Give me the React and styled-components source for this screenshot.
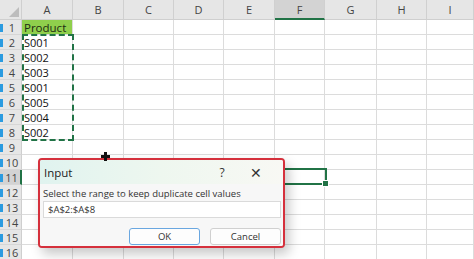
import React from "react";
import styled, {createGlobalStyle, css} from "styled-components";


const GlobalStyle = createGlobalStyle`
  html, body {
    margin: 0;
    padding: 0;
    background: #ffffff;
    overflow: hidden;
  }
  * {
    box-sizing: border-box;
  }
`;


const COLS = ["A", "B", "C", "D", "E", "F", "G", "H", "I"];
const COL_WIDTHS = "22px 51px 51px 50px 50px 51px 50px 52px 50px 1fr";
const ROWS = 16;
const DATA = {1: "Product", 2: "S001", 3: "S002", 4: "S003", 5: "S001", 6: "S005", 7: "S004", 8: "S002"};


const Screen = styled.div`
  position: relative;
  width: 474px;
  height: 259px;
  overflow: hidden;
  font-family: "Open Sans", "Noto Sans", sans-serif;
`;


const Sheet = styled.div`
  display: grid;
  grid-template-columns: ${COL_WIDTHS};
  grid-template-rows: 20px repeat(${ROWS}, 15px);
`;


const Corner = styled.div`
  position: relative;
  background: #e6e6e6;
  border-right: 1px solid #cfcfcf;
  border-bottom: 1px solid #cfcfcf;

  &::after {
    content: "";
    position: absolute;
    right: 2px;
    bottom: 2px;
    width: 0;
    height: 0;
    border-left: 10px solid transparent;
    border-bottom: 10px solid #bdbdbd;
  }
`;


const ColHeader = styled.div`
  display: flex;
  align-items: center;
  justify-content: center;
  background: ${p => p.$active ? "#d3d3d3" : "#e6e6e6"};
  border-right: 1px solid #d0d0d0;
  border-bottom: ${p => p.$active ? "2px solid #217346" : "1px solid #cfcfcf"};
  color: #444;
  font-size: 11px;
`;


const RowHeader = styled.div`
  position: relative;
  display: flex;
  align-items: center;
  justify-content: center;
  background: ${p => p.$active ? "#d3d3d3" : "#e6e6e6"};
  border-right: ${p => p.$active ? "2px solid #217346" : "1px solid #cfcfcf"};
  border-bottom: 1px solid #d6d6d6;
  color: #444;
  font-size: 11px;
  padding-left: 3px;

  &::before {
    content: "";
    position: absolute;
    left: 0;
    top: 4px;
    width: 3px;
    height: 8px;
    background: #2b9be0;
  }
`;


const Cell = styled.div`
  display: flex;
  align-items: center;
  padding-left: 2px;
  border-right: 1px solid #dcdcdc;
  border-bottom: 1px solid #dcdcdc;
  font-size: 11px;
  color: #111;
  white-space: nowrap;
  ${p => p.$title && css`
    background: #8fcf4c;
    color: #1d2a12;
    font-size: 11.5px;
  `}
`;


const Marquee = styled.div`
  position: absolute;
  left: 22px;
  top: 34px;
  width: 52px;
  height: 107px;
  border: 2px dashed #217346;
  pointer-events: none;
`;


const ActiveCell = styled.div`
  position: absolute;
  left: 274px;
  top: 168px;
  width: 53px;
  height: 17px;
  border: 2px solid #217346;

  &::after {
    content: "";
    position: absolute;
    right: -4px;
    bottom: -4px;
    width: 5px;
    height: 5px;
    background: #217346;
    border: 1px solid #fff;
  }
`;


const Cursor = styled.div`
  position: absolute;
  left: 101px;
  top: 152px;
  width: 9px;
  height: 9px;

  &::before, &::after {
    content: "";
    position: absolute;
    background: #111;
  }
  &::before {
    left: 3px;
    top: 0;
    width: 3px;
    height: 9px;
  }
  &::after {
    left: 0;
    top: 3px;
    width: 9px;
    height: 3px;
  }
`;


const Dialog = styled.div`
  position: absolute;
  left: 38px;
  top: 158px;
  width: 247px;
  height: 90px;
  display: flex;
  flex-direction: column;
  background: #f6f6f6;
  border: 2px solid #d5303c;
  border-radius: 4px;
  box-shadow: 4px 6px 12px rgba(0, 0, 0, 0.22);
  overflow: hidden;
`;


const TitleBar = styled.div`
  display: flex;
  align-items: center;
  height: 24px;
  flex-shrink: 0;
  padding: 0 10px 0 4px;
  background: linear-gradient(90deg, #e0f3ef 0%, #eef7ef 50%, #f8f8f4 100%);
  font-size: 11.5px;
  color: #222;
`;


const Title = styled.span`
  flex: 1;
`;


const TitleButton = styled.span`
  width: 34px;
  text-align: center;
  font-size: ${p => p.$large ? "14px" : "12px"};
  color: #333;
`;


const Body = styled.div`
  display: flex;
  flex-direction: column;
  padding: 4px 2px 0 3px;
  background: #f7f7f7;
  flex: 1;
`;


const Label = styled.div`
  font-size: 9.5px;
  color: #333;
  height: 12px;
  line-height: 12px;
`;


const RangeInput = styled.div`
  height: 17px;
  margin-top: 1px;
  padding-left: 4px;
  display: flex;
  align-items: center;
  background: #ffffff;
  border: 1px solid #dadada;
  font-size: 9.5px;
  color: #333;
`;


const Buttons = styled.div`
  display: flex;
  justify-content: flex-end;
  gap: 10px;
  margin-top: 10px;
`;


const Button = styled.div`
  width: 71px;
  height: 17px;
  display: flex;
  align-items: center;
  justify-content: center;
  background: #fdfdfd;
  border: 1px solid ${p => p.$focus ? "#6aa7e0" : "#d0d0d0"};
  border-radius: 3px;
  font-size: 9.5px;
  color: #333;
`;


const App = () => {
    const rows = [];
    for (let r = 1; r <= ROWS; r++) {
        rows.push(
            <RowHeader key={"h" + r} $active={r === 11}>{r}</RowHeader>
        );
        COLS.forEach(c => {
            const val = c === "A" ? DATA[r] : "";
            rows.push(<Cell key={c + r} $title={c === "A" && r === 1}>{val}</Cell>);
        });
    }

    return (
        <Screen>
            <GlobalStyle/>

            <Sheet>
                <Corner/>
                {COLS.map(c => (
                    <ColHeader key={c} $active={c === "F"}>{c}</ColHeader>
                ))}
                {rows}
            </Sheet>

            <Marquee/>
            <ActiveCell/>

            <Dialog>
                <TitleBar>
                    <Title>Input</Title>
                    <TitleButton>?</TitleButton>
                    <TitleButton $large>✕</TitleButton>
                </TitleBar>
                <Body>
                    <Label>Select the range to keep duplicate cell values</Label>
                    <RangeInput>$A$2:$A$8</RangeInput>
                    <Buttons>
                        <Button $focus>OK</Button>
                        <Button>Cancel</Button>
                    </Buttons>
                </Body>
            </Dialog>

            <Cursor/>
        </Screen>
    );
};


export default App;
